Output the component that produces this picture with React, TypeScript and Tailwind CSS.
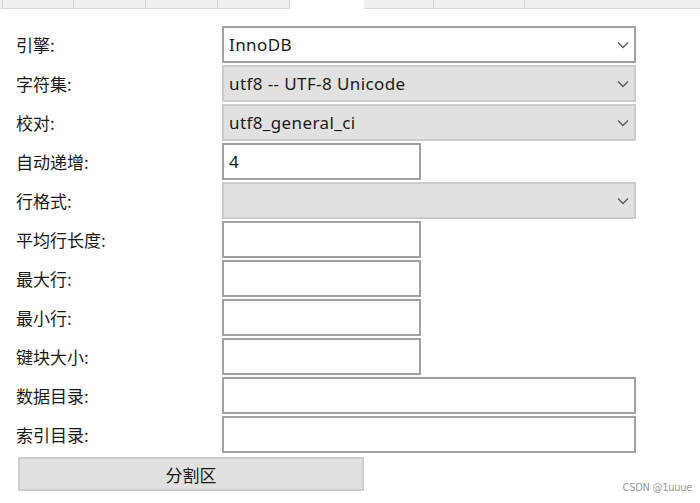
import React from "react";

type Field = {
  label: string;
  kind: "select" | "input";
  value?: string;
  gray?: boolean;
  short?: boolean;
};

const fields: Field[] = [
  { label: "引擎:", kind: "select", value: "InnoDB" },
  { label: "字符集:", kind: "select", value: "utf8 -- UTF-8 Unicode", gray: true },
  { label: "校对:", kind: "select", value: "utf8_general_ci", gray: true },
  { label: "自动递增:", kind: "input", value: "4", short: true },
  { label: "行格式:", kind: "select", gray: true },
  { label: "平均行长度:", kind: "input", short: true },
  { label: "最大行:", kind: "input", short: true },
  { label: "最小行:", kind: "input", short: true },
  { label: "键块大小:", kind: "input", short: true },
  { label: "数据目录:", kind: "input" },
  { label: "索引目录:", kind: "input" },
];

const tabs = [
  { w: "w-[72px]", active: false },
  { w: "w-[72px]", active: false },
  { w: "w-[72px]", active: false },
  { w: "w-[72px]", active: false },
  { w: "w-[74px]", active: true },
  { w: "w-[70px]", active: false },
  { w: "w-[91px]", active: false },
];

function Chevron() {
  return (
    <svg width="12" height="8" viewBox="0 0 12 8" className="shrink-0">
      <path d="M1 1.5 L6 6.5 L11 1.5" fill="none" stroke="#5a5a5a" strokeWidth="1.4" />
    </svg>
  );
}

export default function App() {
  return (
    <div className="relative w-[700px] h-[503px] bg-white overflow-hidden font-['Noto_Sans_CJK_SC',sans-serif] text-[#1a1a1a]">
      {/* Tab strip (cut off at top) */}
      <div className="flex h-[9px] bg-[#f0f0f0]">
        {tabs.map((t, i) => (
          <div
            key={i}
            className={`${t.w} h-full ${
              t.active ? "bg-white" : "border-b border-[#d9d9d9] border-r border-r-[#d4d4d4]"
            } ${i === 0 ? "border-l border-l-[#d4d4d4] ml-[2px]" : ""}`}
          />
        ))}
        <div className="flex-1 h-full border-b border-[#d9d9d9]" />
      </div>

      {/* Form */}
      <div className="flex flex-col gap-[2px] pt-[17px]">
        {fields.map((f) => (
          <div key={f.label} className="flex items-center h-[37px]">
            <div className="w-[222px] pl-[16px] text-[17px] leading-none">{f.label}</div>
            <div
              className={`h-full flex items-center pl-[5px] pr-[5px] border-2 ${
                f.short ? "w-[199px]" : "w-[414px]"
              } ${f.gray ? "bg-[#e1e1e1] border-[#cccccc]" : "bg-white border-[#a2a2a2]"}`}
            >
              <span className="flex-1 text-[17px] tracking-[0.4px] font-['Noto_Sans','Noto_Sans_CJK_SC',sans-serif] leading-none">
                {f.value ?? ""}
              </span>
              {f.kind === "select" && <Chevron />}
            </div>
          </div>
        ))}
        <div className="pl-[18px] pt-[2px]">
          <button className="w-[346px] h-[34px] bg-[#e1e1e1] border-2 border-[#cdcdcd] text-[17px] leading-none">
            分割区
          </button>
        </div>
      </div>

      <div className="absolute right-[8px] bottom-[7px] text-[11px] text-[#9a9a9a] font-['DejaVu_Sans_Condensed','DejaVu_Sans',sans-serif] tracking-tight">
        CSDN @1uuue
      </div>
    </div>
  );
}
